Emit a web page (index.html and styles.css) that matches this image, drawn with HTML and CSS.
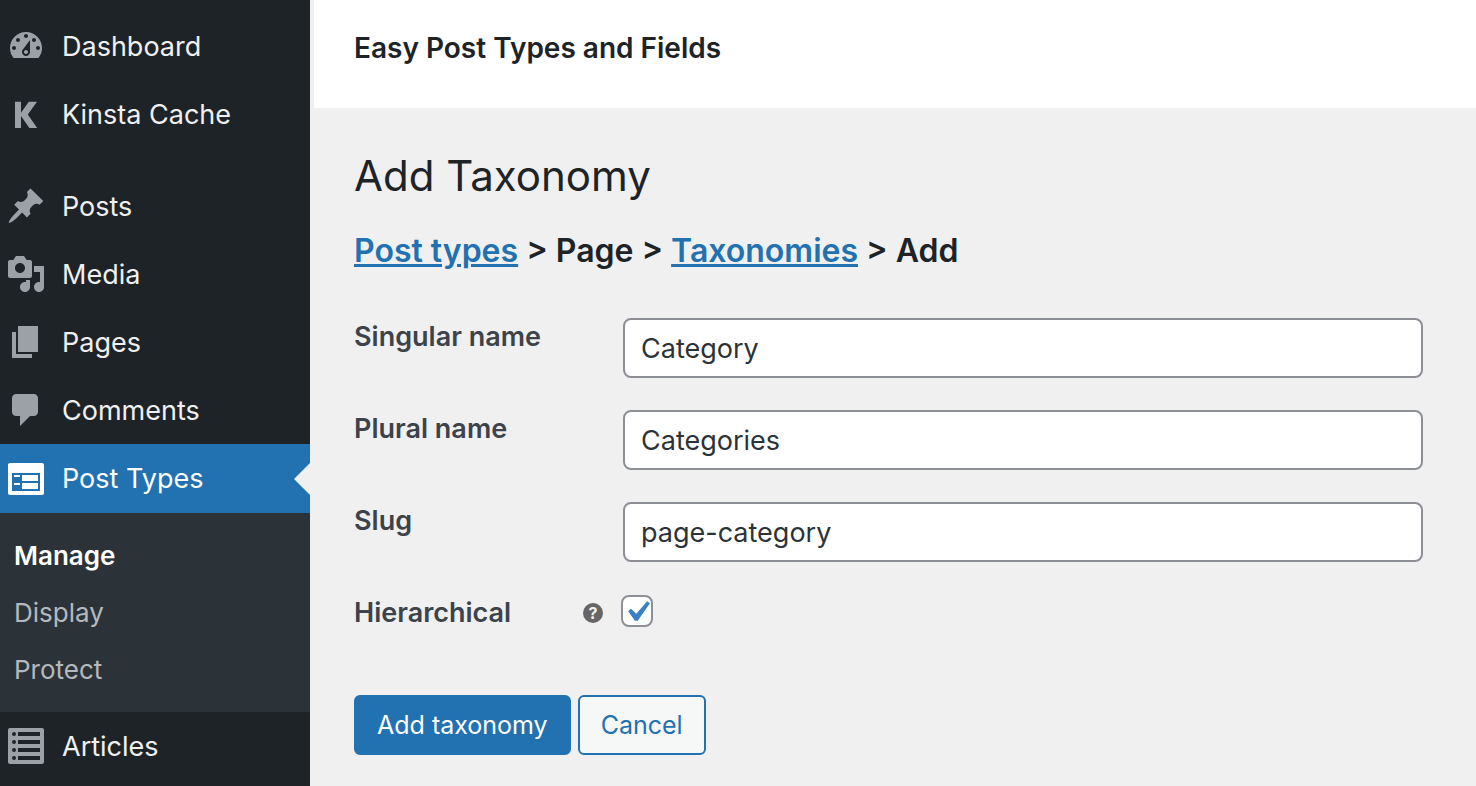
FILE: index.html
```html
<!DOCTYPE html>
<html lang="en">
<head>
<meta charset="utf-8">
<meta name="viewport" content="width=device-width, initial-scale=1">
<title>Add Taxonomy</title>
<link rel="stylesheet" href="styles.css">
</head>
<body>
<div class="layout">
  <nav class="sidebar" aria-label="Main menu">
    <ul class="menu">
      <li><a class="menu-link" href="#">
        <svg class="icon" viewBox="0 0 20 20" aria-hidden="true"><path fill-rule="evenodd" d="M3.76 16h12.48c1.1-1.37 1.76-3.11 1.76-5 0-4.42-3.58-8-8-8s-8 3.58-8 8c0 1.89.66 3.63 1.76 5zM10 4c.55 0 1 .45 1 1s-.45 1-1 1-1-.45-1-1 .45-1 1-1zM6 6c.55 0 1 .45 1 1s-.45 1-1 1-1-.45-1-1 .45-1 1-1zm8 0c.55 0 1 .45 1 1s-.45 1-1 1-1-.45-1-1 .45-1 1-1zm-5.37 5.55L12 7v6c0 1.1-.9 2-2 2s-2-.9-2-2c0-.57.24-1.08.63-1.45zM4 10c.55 0 1 .45 1 1s-.45 1-1 1-1-.45-1-1 .45-1 1-1zm12 0c.55 0 1 .45 1 1s-.45 1-1 1-1-.45-1-1 .45-1 1-1zm-5 3c0-.55-.45-1-1-1s-1 .45-1 1 .45 1 1 1 1-.45 1-1z"/></svg>
        Dashboard</a></li>
      <li><a class="menu-link" href="#">
        <svg class="icon" viewBox="0 0 20 20" aria-hidden="true"><path d="M4.5 3.9h3v5.5l3.9-5.5h4.1L10.9 10.2l4.7 6.8h-3.9L7.5 11v6h-3z"/></svg>
        Kinsta Cache</a></li>
      <li class="group-start"><a class="menu-link" href="#">
        <svg class="icon" viewBox="0 0 20 20" aria-hidden="true"><path d="M10.44 3.02l1.82-1.82 6.36 6.35-1.83 1.82c-1.05-.68-2.48-.57-3.41.36l-.75.75c-.92.93-1.04 2.35-.35 3.41l-1.83 1.82-2.41-2.41-2.8 2.79c-.42.42-3.38 2.71-3.8 2.29s1.86-3.39 2.28-3.81l2.79-2.79L4.1 9.36l1.83-1.82c1.05.69 2.48.57 3.4-.36l.75-.75c.93-.92 1.05-2.35.36-3.41z"/></svg>
        Posts</a></li>
      <li><a class="menu-link" href="#">
        <svg class="icon" viewBox="0 0 20 20" aria-hidden="true"><path fill-rule="evenodd" d="M13 11V4c0-.55-.45-1-1-1h-1.67L9 1H5L3.67 3H2c-.55 0-1 .45-1 1v7c0 .55.45 1 1 1h10c.55 0 1-.45 1-1zM7 4.5c1.38 0 2.5 1.12 2.5 2.5S8.38 9.5 7 9.5 4.5 8.38 4.5 7 5.62 4.5 7 4.5zM14 6h5v10.5c0 1.38-1.12 2.5-2.5 2.5S14 17.88 14 16.5s1.12-2.5 2.5-2.5c.17 0 .34.02.5.05V9h-3V6zm-4 8.05V13h2v3.5c0 1.38-1.12 2.5-2.5 2.5S7 17.88 7 16.5 8.12 14 9.5 14c.17 0 .34.02.5.05z"/></svg>
        Media</a></li>
      <li><a class="menu-link" href="#">
        <svg class="icon" viewBox="0 0 20 20" aria-hidden="true"><path d="M6 15V2h10v13H6zm-1 1h8v2H3V5h2v11z"/></svg>
        Pages</a></li>
      <li><a class="menu-link" href="#">
        <svg class="icon" viewBox="0 0 20 20" aria-hidden="true"><path d="M5 2h9c1.1 0 2 .9 2 2v7c0 1.1-.9 2-2 2h-2l-5 5v-5H5c-1.1 0-2-.9-2-2V4c0-1.1.9-2 2-2z"/></svg>
        Comments</a></li>
      <li><a class="menu-link current" href="#" aria-current="page">
        <svg class="icon" viewBox="0 0 20 20" aria-hidden="true"><path fill-rule="evenodd" d="M2 2h16c.55 0 1 .45 1 1v14c0 .55-.45 1-1 1H2c-.55 0-1-.45-1-1V3c0-.55.45-1 1-1zm15 14V7H3v9h14z"/><path d="M4 8v1h3V8H4zm4 0v3h8V8H8zm-4 4v1h3v-1H4zm4 0v3h8v-3H8z"/></svg>
        Post Types</a>
        <ul class="submenu">
          <li><a class="submenu-link active" href="#">Manage</a></li>
          <li><a class="submenu-link" href="#">Display</a></li>
          <li><a class="submenu-link" href="#">Protect</a></li>
        </ul>
      </li>
      <li><a class="menu-link" href="#">
        <svg class="icon" viewBox="0 0 20 20" aria-hidden="true"><path fill-rule="evenodd" d="M2 19h16c.55 0 1-.45 1-1V2c0-.55-.45-1-1-1H2c-.55 0-1 .45-1 1v16c0 .55.45 1 1 1zM4 3a1 1 0 1 1 0 2 1 1 0 0 1 0-2zm13 0v2H6V3h11zM4 7a1 1 0 1 1 0 2 1 1 0 0 1 0-2zm13 0v2H6V7h11zM4 11a1 1 0 1 1 0 2 1 1 0 0 1 0-2zm13 0v2H6v-2h11zM4 15a1 1 0 1 1 0 2 1 1 0 0 1 0-2zm13 0v2H6v-2h11z"/></svg>
        Articles</a></li>
    </ul>
  </nav>
  <div class="page">
    <header class="topbar">Easy Post Types and Fields</header>
    <main class="content">
      <h1 class="title">Add Taxonomy</h1>
      <h2 class="breadcrumb"><a href="#">Post types</a> &gt; Page &gt; <a href="#">Taxonomies</a> &gt; Add</h2>
      <form class="form">
        <div class="field">
          <label class="label" for="singular">Singular name</label>
          <input class="text-input" id="singular" type="text" value="Category">
        </div>
        <div class="field">
          <label class="label" for="plural">Plural name</label>
          <input class="text-input" id="plural" type="text" value="Categories">
        </div>
        <div class="field">
          <label class="label" for="slug">Slug</label>
          <input class="text-input" id="slug" type="text" value="page-category">
        </div>
        <div class="field">
          <div class="label-group">
            <label class="label" for="hierarchical">Hierarchical</label>
            <button class="help" type="button" aria-label="Help">?</button>
          </div>
          <span class="check">
            <input class="checkbox" id="hierarchical" type="checkbox" checked>
            <svg class="tick" viewBox="0 0 20 20" aria-hidden="true"><path d="M14.83 4.89l1.34.94-5.81 8.38H9.02L5.78 9.67l1.34-1.25 2.57 2.4z"/></svg>
          </span>
        </div>
        <div class="actions">
          <button class="button primary" type="button">Add taxonomy</button>
          <button class="button secondary" type="button">Cancel</button>
        </div>
      </form>
    </main>
  </div>
</div>
</body>
</html>
```
FILE: styles.css
```css
*, *::before, *::after { box-sizing: border-box; }

body {
  margin: 0;
  background: #f0f0f1;
  color: #1d2327;
  font-family: Inter, "Liberation Sans", sans-serif;
  font-size: 27px;
}

.layout { display: flex; min-height: 100vh; }

.sidebar { flex: 0 0 310px; padding-top: 12px; background: #1d2327; }

.menu, .submenu { margin: 0; padding: 0; list-style: none; }

.group-start { margin-top: 24px; }

.menu-link {
  display: flex;
  align-items: center;
  gap: 16px;
  height: 68px;
  padding-left: 6px;
  color: #f0f0f1;
  text-decoration: none;
}

.icon { width: 40px; height: 40px; fill: #9ca1a8; }

.current { position: relative; height: 69px; background: #2271b1; color: #fff; }
.current .icon { fill: #fff; }
.current::after {
  content: "";
  position: absolute;
  top: 50%;
  right: 0;
  margin-top: -16px;
  border: 16px solid transparent;
  border-left-width: 0;
  border-right-color: #f0f0f1;
}

.submenu { padding: 14px 0; background: #2c3338; }

.submenu-link {
  display: block;
  padding-left: 14px;
  color: #b4b9be;
  font-size: 26px;
  line-height: 57px;
  text-decoration: none;
}
.submenu-link.active { color: #fff; font-weight: 600; }

.page { flex: 1; min-width: 0; }

.topbar {
  margin-left: 4px;
  padding: 28px 40px 40px;
  background: #fff;
  font-size: 28px;
  font-weight: 600;
  line-height: 40px;
}

.content { padding: 40px 51px 30px 44px; }

.title { margin: 0; font-size: 42px; font-weight: 400; line-height: 56px; }

.breadcrumb { margin: 24px 0 44px; font-size: 32px; font-weight: 600; line-height: 46px; }
.breadcrumb a { color: #2271b1; }

.form { display: grid; gap: 32px; }

.field { display: grid; grid-template-columns: 267px minmax(0, 802px); align-items: start; }

.label { color: #3c434a; font-weight: 600; line-height: 38px; }

.label-group { display: flex; align-items: center; justify-content: space-between; padding-right: 18px; }

.text-input {
  height: 60px;
  margin-left: 2px;
  padding: 0 16px;
  border: 2px solid #8c8f94;
  border-radius: 8px;
  background: #fff;
  color: #2c3338;
  font: inherit;
}

.help {
  width: 20px;
  height: 20px;
  padding: 0;
  border: 0;
  border-radius: 50%;
  background: #666;
  color: #f0f0f1;
  font: 700 16px/20px Inter, sans-serif;
}

.check { position: relative; width: 32px; height: 32px; margin-top: 1px; }

.checkbox {
  display: block;
  width: 32px;
  height: 32px;
  margin: 0;
  appearance: none;
  border: 2px solid #8c8f94;
  border-radius: 8px;
  background: #fff;
}

.tick {
  position: absolute;
  inset: -4px -5px -6px;
  display: none;
  width: 42px;
  height: 42px;
  fill: #3582c4;
  pointer-events: none;
}
.checkbox:checked + .tick { display: block; }

.actions { display: flex; gap: 7px; margin-top: 31px; }

.button {
  height: 60px;
  padding: 0 21px;
  border: 2px solid #2271b1;
  border-radius: 6px;
  font-family: inherit;
  font-size: 25px;
}
.primary { background: #2271b1; color: #fff; }
.secondary { background: #f6f7f7; color: #2271b1; }
```
